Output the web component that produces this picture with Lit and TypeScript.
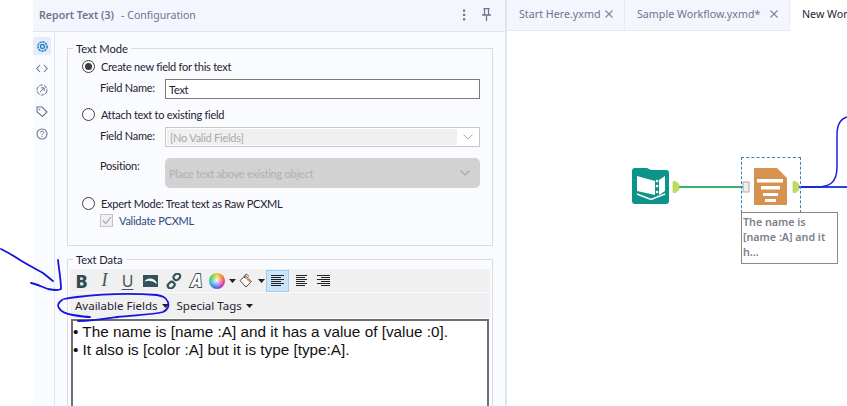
import { LitElement, html, css, svg } from "lit";
import { customElement } from "lit/decorators.js";

const arrowDown = html`<svg class="caret" width="7" height="4" viewBox="0 0 7 4"><path d="M0 0h7L3.500 4z" fill="#222"/></svg>`;
const closeX = html`<svg width="8" height="8" viewBox="0 0 8 8"><path d="M.5.500l7 7M7.500.500l-7 7" stroke="#7d86a0" stroke-width="1.100"/></svg>`;
const alignLines = (kind: string) =>
  html`<svg width="13" height="12" viewBox="0 0 13 12" shape-rendering="crispEdges">${[0, 2, 4, 6, 8, 10].map((y, i) => {
    const w = i % 2 === 0 ? 13 : kind === "left" ? 10 : 9;
    const x = kind === "left" ? 0 : kind === "center" ? 2 : 13 - w;
    return svg`<rect x="${x}" y="${y}" width="${w}" height="1" fill="#222"/>`;
  })}</svg>`;

@customElement("app-root")
export class AppRoot extends LitElement {
  static styles = css`
    :host { display: flex; width: 847px; height: 406px; overflow: hidden; position: relative; background: #fff; font-family: "Lato", sans-serif; font-size: 11px; letter-spacing: -.25px; color: #1d2233; }
    .gutter { width: 33px; flex: none; }
    .panel { width: 472px; flex: none; display: flex; flex-direction: column; background: #fafbfe; }
    .head { flex: none; box-sizing: border-box; height: 32px; display: flex; align-items: center; padding: 0 10px 2px 6px; background: #f3f6fc; border-bottom: 1px solid #dfe5f1; color: #6b7590; font-family: "Noto Sans", sans-serif; font-size: 10.6px; letter-spacing: 0; }
    .head b { font-weight: 600; }
    .head .sub { margin-left: 7px; flex: 1; }
    .head .icons { display: flex; align-items: center; gap: 15px; padding-right: 3px; }
    .body { flex: 1; display: flex; min-height: 0; }
    .side { width: 21px; flex: none; border-right: 1px solid #dfe5f1; display: flex; flex-direction: column; align-items: flex-start; padding-top: 5px; gap: 4px; }
    .side div { width: 18px; height: 18px; display: flex; align-items: center; justify-content: center; border-radius: 2px; }
    .side .on { background: #e3edfb; }
    .content { flex: 1; min-width: 0; padding: 10px 12px 0 12px; }
    fieldset { margin: 0; padding: 0; border: 1px solid #d9dce2; }
    legend { padding: 0 3px; margin-left: 3px; line-height: 13px; font-size: 11.2px; letter-spacing: -.05px; color: #1d2233; }
    .mode legend { margin-left: -9px; }
    .mode { height: 198px; padding: 4px 0 0 14px; margin-bottom: 7px; box-sizing: content-box; }
    .row { display: flex; align-items: center; height: 14px; }
    .radio { width: 11px; height: 11px; border: 1px solid #3c3c3c; border-radius: 50%; background: #fff; display: flex; align-items: center; justify-content: center; margin-right: 6px; flex: none; }
    .radio i { width: 7px; height: 7px; border-radius: 50%; background: #3c3c3c; }
    .sub-row { display: flex; align-items: center; margin-left: 18px; margin-top: 6px; }
    .sub-row label { width: 65px; flex: none; padding-bottom: 3px; }
    .sub-row.top { align-items: flex-start; margin-top: 11px; }
    .sub-row.top label { padding: 1px 0 0; }
    .field { width: 315px; box-sizing: border-box; height: 20px; border: 1px solid #7a7a7a; background: #fff; display: flex; align-items: center; padding: 0 3px; }
    .select { border: 1px solid #c8c8c8; color: #a9a9a9; padding: 1px; }
    .select span { flex: 1; background: #f0f0f0; height: 100%; display: flex; align-items: center; padding-left: 3px; }
    .select svg { margin: 0 5px 0 6px; }
    .pos { height: 30px; border: none; border-radius: 5px; background: #d2d2d2; color: #b0b0b0; justify-content: space-between; padding: 0 10px 0 4px; }
    .gap-a { margin-top: 8px; }
    .gap-b { margin-top: 8px; }
    .check { display: flex; align-items: center; margin: 3px 0 0 18px; height: 14px; color: #2b4a7f; }
    .check i { width: 13px; height: 13px; box-sizing: border-box; border: 1px solid #c4c4c4; background: #f0f0f0; margin-right: 6px; display: flex; align-items: center; justify-content: center; }
    .data { height: 160px; padding: 0 2px; }
    .bar { background: #f0f0f0; display: flex; align-items: center; font-family: "Noto Sans", sans-serif; letter-spacing: 0; }
    .tools { height: 23px; margin-top: 3px; }
    .t { width: 23px; height: 22px; display: flex; align-items: center; justify-content: center; flex: none; }
    .t.b { font: 800 18px "Noto Sans", sans-serif; color: #2e4a4e; }
    .t.i { font: italic 500 18px "Liberation Serif", serif; color: #44555a; }
    .t.u { font: 400 16px "Noto Sans", sans-serif; color: #44555a; text-decoration: underline; text-underline-offset: 2px; text-decoration-thickness: 1px; }
    .t.a { font: italic 800 17px "Noto Sans", sans-serif; color: #fff; -webkit-text-stroke: 1.8px #35525a; paint-order: stroke fill; }
    .t.color { width: 30px; justify-content: flex-start; padding-left: 1px; box-sizing: border-box; }
    .wheel { width: 16px; height: 16px; border-radius: 50%; flex: none; background: radial-gradient(circle, rgba(255,255,255,.9) 0, rgba(255,255,255,0) 62%), conic-gradient(#f0d030, #f47a30, #e83880, #9a40d8, #3a70e8, #30c0d8, #58d050, #f0d030); }
    .t.bucket { width: 28px; justify-content: flex-start; box-sizing: border-box; padding-left: 1px; }
    .t.sel { background: #cce4f8; border: 1px solid #99cdf3; box-sizing: border-box; }
    .caret { margin-left: 4px; flex: none; }
    .bar2 { height: 25px; margin-top: 1px; padding-left: 5px; font-size: 11.5px; }
    .bar2 span { display: flex; align-items: center; }
    .bar2 span + span { margin-left: 8px; }
    .area { margin: 1px 1px 0; height: 90px; border: 2px solid #6e6e6e; border-bottom: none; background: #fff; font: 15.3px/18px "Liberation Sans", sans-serif; letter-spacing: 0; color: #111; padding: 2px 0 0 0; }
    .div { width: 2px; flex: none; background: #dde4f2; }
    .main { flex: 1; min-width: 0; display: flex; flex-direction: column; }
    .tabs { height: 31px; display: flex; flex: none; background: #fff; font-family: "Noto Sans", sans-serif; font-size: 10.7px; letter-spacing: 0; }
    .tab { width: 118px; box-sizing: border-box; display: flex; align-items: center; justify-content: space-between; padding: 0 11px 3px 12px; background: #f3f6fc; border-right: 1px solid #e6ebf4; border-bottom: 1px solid #e3e8f2; color: #6b7590; flex: none; }
    .tab.wide { width: 165px; }
    .tab.cur { width: auto; background: #fff; border: none; color: #1d2233; }
    .canvas { flex: 1; position: relative; background: #fff; }
    .sel-box { position: absolute; left: 234px; top: 126px; width: 58px; height: 55px; border: 1px dashed #2b86c5; border-bottom: none; }
    .note { position: absolute; left: 234px; top: 181px; width: 97px; height: 52px; border: 1px solid #8a8a8a; background: #fff; box-sizing: border-box; font: 600 10.7px/15px "Noto Sans", sans-serif; letter-spacing: 0; color: #7a7f8c; padding: 2px 1px 0 1px; }
    .wires { position: absolute; left: 0; top: -1px; }
    .ink { position: absolute; left: 0; top: 0; pointer-events: none; }
  `;

  render() {
    return html`
      <div class="gutter"></div>
      <div class="panel">
        <div class="head">
          <b>Report Text (3)</b><span class="sub">- Configuration</span>
          <span class="icons">
            <svg width="4" height="12" viewBox="0 0 4 12"><g fill="#6b7590"><rect x="1" y="0.5" width="2.200" height="2.200"/><rect x="1" y="4.800" width="2.200" height="2.200"/><rect x="1" y="9.200" width="2.200" height="2.200"/></g></svg>
            <svg width="11" height="13" viewBox="0 0 11 13"><path d="M2.500.5h6M3.500.5v6M7.500.5v6M1 7h9M5.500 7v6" fill="none" stroke="#6b7590" stroke-width="1.300"/></svg>
          </span>
        </div>
        <div class="body">
          <div class="side">
            <div class="on"><svg width="13" height="13" viewBox="0 0 13 13"><circle cx="6.500" cy="6.500" r="2" fill="none" stroke="#2d7fc4" stroke-width="1.400"/><circle cx="6.500" cy="6.500" r="4.600" fill="none" stroke="#2d7fc4" stroke-width="1.600" stroke-dasharray="2.200 .8"/></svg></div>
            <div><svg width="12" height="9" viewBox="0 0 12 9"><path d="M4 1 .8 4.500 4 8M8 1l3.200 3.500L8 8" fill="none" stroke="#6b7590" stroke-width="1.100"/></svg></div>
            <div><svg width="12" height="12" viewBox="0 0 12 12"><circle cx="6" cy="6" r="5" fill="none" stroke="#6b7590" stroke-dasharray="4 1"/><path d="M4 8l4-4M5 3.800h3.200V7" fill="none" stroke="#6b7590"/></svg></div>
            <div><svg width="12" height="12" viewBox="0 0 12 12"><path d="M1 1h5l5 5-4.500 4.500L1.200 6z" fill="none" stroke="#6b7590" stroke-width="1.100"/><circle cx="3.600" cy="3.600" r=".8" fill="#6b7590"/></svg></div>
            <div><svg width="12" height="12" viewBox="0 0 12 12"><circle cx="6" cy="6" r="5" fill="none" stroke="#6b7590" stroke-width="1.100"/><path d="M4.400 4.700c0-2 3.300-2 3.300-.1 0 1.200-1.700 1.200-1.700 2.700" fill="none" stroke="#6b7590"/><rect x="5.500" y="8" width="1" height="1" fill="#6b7590"/></svg></div>
          </div>
          <div class="content">
            <fieldset class="mode">
              <legend>Text Mode</legend>
              <div class="row"><span class="radio"><i></i></span>Create new field for this text</div>
              <div class="sub-row"><label>Field Name:</label><div class="field">Text</div></div>
              <div class="row gap-a"><span class="radio"></span>Attach text to existing field</div>
              <div class="sub-row"><label>Field Name:</label><div class="field select"><span>[No Valid Fields]</span><svg width="10" height="6" viewBox="0 0 10 6"><path d="M.5.500 5 5 9.500.500" fill="none" stroke="#aaa"/></svg></div></div>
              <div class="sub-row top"><label>Position:</label><div class="field pos">Place text above existing object<svg width="10" height="6" viewBox="0 0 10 6"><path d="M.5.500 5 5 9.500.500" fill="none" stroke="#aaa" stroke-width="1.300"/></svg></div></div>
              <div class="row gap-b"><span class="radio"></span>Expert Mode: Treat text as Raw PCXML</div>
              <div class="check"><i><svg width="10" height="9" viewBox="0 0 10 9"><path d="M1 4.500 3.800 7.500 9 1" fill="none" stroke="#a8a8a8" stroke-width="1.200"/></svg></i>Validate PCXML</div>
            </fieldset>
            <fieldset class="data">
              <legend>Text Data</legend>
              <div class="bar tools">
                <span class="t b">B</span><span class="t i">I</span><span class="t u">U</span>
                <span class="t"><svg width="15" height="12" viewBox="0 0 15 12"><rect width="15" height="12" fill="#35525a"/><path d="M1.500 6.500C4 2.500 10 2.500 13.500 7v2C10 5.800 6 5 1.500 6.500z" fill="#fff"/></svg></span>
                <span class="t"><svg width="16" height="16" viewBox="0 0 16 16"><g fill="none" stroke="#35525a" stroke-width="2.200"><rect x="7.500" y="1" width="7" height="5.500" rx="2.500" transform="rotate(-45 11 4)"/><rect x="1.500" y="9.500" width="7" height="5.500" rx="2.500" transform="rotate(-45 5 12)"/></g></svg></span>
                <span class="t a">A</span>
                <span class="t color"><span class="wheel"></span>${arrowDown}</span>
                <span class="t bucket"><svg width="15" height="15" viewBox="0 0 15 15"><path d="M1 7.500 6.500 2.500 12.500 8.500 7 14z" fill="#fff" stroke="#4c4c4c"/><path d="M6.500 2.500 12.500 8.500 11 10 5 4z" fill="#c9a870"/><path d="M5.500 5C4.800 1 8.500-.2 9.500 3.500" fill="none" stroke="#4c4c4c"/></svg>${arrowDown}</span>
                <span class="t sel">${alignLines("left")}</span>
                <span class="t">${alignLines("center")}</span>
                <span class="t">${alignLines("right")}</span>
              </div>
              <div class="bar bar2"><span>Available Fields${arrowDown}</span><span>Special Tags${arrowDown}</span></div>
              <div class="area">• The name is [name :A] and it has a value of [value :0].<br>• It also is [color :A] but it is type [type:A].</div>
            </fieldset>
          </div>
        </div>
      </div>
      <div class="div"></div>
      <div class="main">
        <div class="tabs">
          <div class="tab">Start Here.yxmd${closeX}</div>
          <div class="tab wide">Sample Workflow.yxmd*${closeX}</div>
          <div class="tab cur">New Workflow1*</div>
        </div>
        <div class="canvas">
          <svg class="wires" width="340" height="376" viewBox="0 0 340 376">
            <path d="M172 157H240" stroke="#3cae6e" stroke-width="2" fill="none"/>
            <path d="M292 157H340" stroke="#3040e0" stroke-width="2" fill="none"/>
            <path d="M292 157h18c12 0 20-4 20-20V105c0-10 3-16 10-18" stroke="#1d1de0" stroke-width="1.500" fill="none"/>
            <path d="M166 151.500h3l3 3v5l-3 3h-3z" fill="#bfdc5c" stroke="#a6c64c" stroke-width=".5"/>
            <path d="M128 138h12l4 2h15c2 0 3 1 3 3v28c0 2-1 3-3 3h-31c-2 0-3-1-3-3v-30c0-2 1-3 3-3z" fill="#0d9488"/>
            <path d="M130 146l18 5v14l-18-4zM158 146l-6 4v15l6-4z" fill="#fff"/>
            <path d="M130 164l14 5.500 14-5.500" fill="none" stroke="#fff" stroke-width="1.400"/>
            <g fill="#fff"><circle cx="150" cy="151" r="1.300"/><circle cx="150" cy="156" r="1.300"/><circle cx="150" cy="162" r="1.300"/></g>
          </svg>
          <div class="sel-box"></div>
          <svg class="wires" width="340" height="376" viewBox="0 0 340 376">
            <rect x="236" y="152" width="6" height="10" fill="#eee" stroke="#999" stroke-width=".8"/>
            <path d="M248 138h22l10 10v26c0 .6-.4 1-1 1h-31c-.7 0-1-.4-1-1v-35c0-.6.4-1 1-1z" fill="#d6924e"/>
            <g fill="#fff"><rect x="250" y="149" width="26" height="3.500"/><rect x="254" y="156" width="19" height="3.500"/><rect x="256" y="163" width="15" height="3"/><rect x="258" y="169" width="11" height="3"/></g>
            <path d="M286 151.500h3l3 3v5l-3 3h-3z" fill="#bfdc5c" stroke="#a6c64c" stroke-width=".5"/>
          </svg>
          <div class="note">The name is [name :A] and it h...</div>
        </div>
      </div>
      <svg class="ink" width="847" height="406" viewBox="0 0 847 406">
        <g fill="none" stroke="#1414e0" stroke-width="1.800" stroke-linecap="round" stroke-linejoin="round">
          <path d="M1 249c6 3 13 7 19 11 8 5 16 9 23 13 4 3 7 6 10 8"/>
          <path d="M58 260c1 10 3 20 3 29-3 2-8 1-13 0-6-2-11-5-17-6"/>
          <path d="M78 321c14 0 26-2 39-4 16-2 34-2 46-5 6-3 6-7 5-10-2-5-6-6-11-7-24-2-56-1-80 2-8 1-15 2-15 3-4 3-5 6-3 8 2 4 8 6 14 7 6 1 12 2 17 2"/>
        </g>
      </svg>
    `;
  }
}
